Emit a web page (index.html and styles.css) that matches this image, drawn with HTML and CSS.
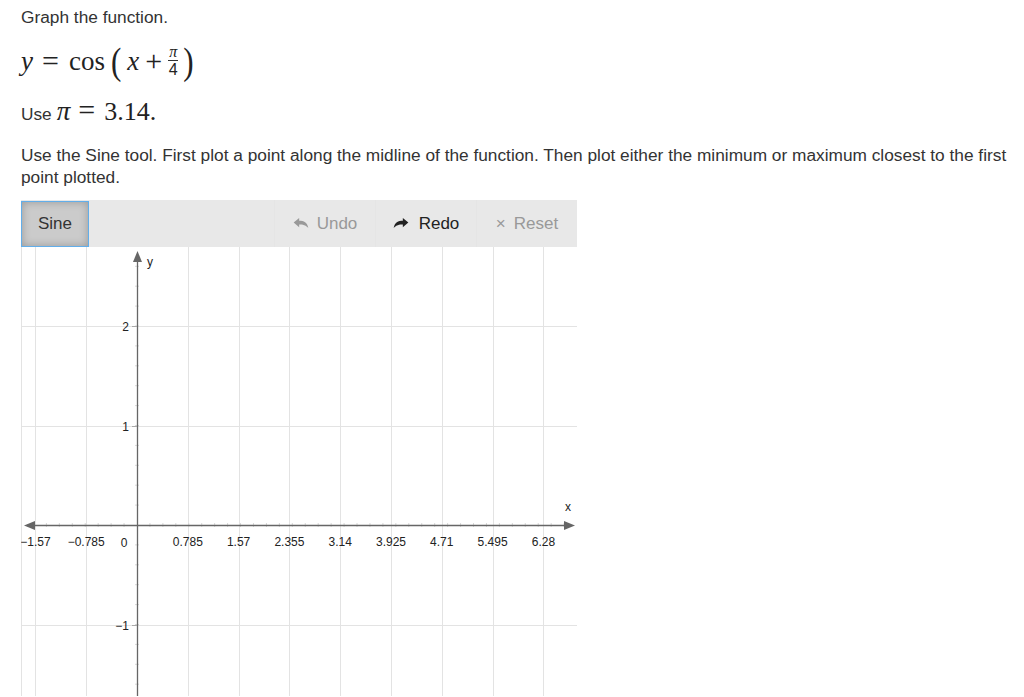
FILE: index.html
```html
<!DOCTYPE html>
<html lang="en">
<head>
    <meta charset="UTF-8">
    <title>Graph the function</title>
    <link rel="stylesheet" href="styles.css">
</head>
<body>
    <div class="question">
        <p class="prompt">Graph the function.</p>

        <div class="math">
            <span class="var">y</span><span class="op">=</span><span class="fn">cos</span><span class="paren">(</span><span class="var">x</span><span class="op plus">+</span><span class="frac"><span class="num">π</span><span class="den">4</span></span><span class="paren close">)</span>
        </div>

        <p class="use">Use<span class="pi">π</span><span class="op">=</span><span class="val">3.14.</span></p>

        <p class="instructions">Use the Sine tool. First plot a point along the midline of the function. Then plot either the minimum or maximum closest to the first point plotted.</p>

        <div class="tool">
            <div class="toolbar">
                <button class="sine">Sine</button>
                <div class="spacer"></div>
                <button class="action disabled">
                    <svg width="16" height="11" viewBox="0 0 16 12"><path d="M0 5 L6 0 V3 C11 3 15 5 16 11 C13 7.5 10 7 6 7 V10 Z" fill="currentColor"/></svg>
                    Undo
                </button>
                <button class="action">
                    <svg width="16" height="11" viewBox="0 0 16 12"><path d="M16 5 L10 0 V3 C5 3 1 5 0 11 C3 7.5 6 7 10 7 V10 Z" fill="currentColor"/></svg>
                    Redo
                </button>
                <button class="action disabled">
                    <span class="times">×</span>
                    Reset
                </button>
            </div>

            <svg class="graph" id="graph" width="556" height="449"></svg>
        </div>
    </div>

    <script>
        // Koordinatensystem: Ursprung und Abstände der Gitterlinien
        const ox = 116, oy = 278;
        const dx = 50.8, dy = 99.5;
        const w = 556, h = 449;
        const svg = document.getElementById("graph");
        let out = "";

        function line(x1, y1, x2, y2, cls) {
            out += `<line x1="${x1}" y1="${y1}" x2="${x2}" y2="${y2}" class="${cls}"/>`;
        }
        function text(x, y, s, cls) {
            out += `<text x="${x}" y="${y}" class="${cls}">${s}</text>`;
        }

        // Gitter
        line(0.5, 0, 0.5, h, "grid");
        for (let i = -2; i <= 8; i++) {
            if (i === 0) continue;
            const x = Math.round(ox + i * dx) + 0.5;
            line(x, 0, x, h, "grid");
        }
        for (let j = -1; j <= 2; j++) {
            if (j === 0) continue;
            const y = Math.round(oy - j * dy) + 0.5;
            line(0, y, w, y, "grid");
        }

        // kleine Striche
        const sx = dx / 0.785 * 0.2;
        for (let x = ox - sx; x > 4; x -= sx) line(x, oy - 2, x, oy + 2, "minor");
        for (let x = ox + sx; x < w - 8; x += sx) line(x, oy - 2, x, oy + 2, "minor");
        for (let y = oy - dy / 5; y > 14; y -= dy / 5) line(ox - 2, y, ox + 2, y, "minor");
        for (let y = oy + dy / 5; y < h; y += dy / 5) line(ox - 2, y, ox + 2, y, "minor");

        // Achsen
        line(6, oy + 0.5, w - 8, oy + 0.5, "axis");
        line(ox + 0.5, 12, ox + 0.5, h, "axis");
        out += `<path d="M3 ${oy + 0.5} L14 ${oy - 4} L14 ${oy + 5} Z" class="arrow"/>`;
        out += `<path d="M${w - 2} ${oy + 0.5} L${w - 13} ${oy - 4} L${w - 13} ${oy + 5} Z" class="arrow"/>`;
        out += `<path d="M${ox + 0.5} 4 L${ox - 4} 15 L${ox + 5} 15 Z" class="arrow"/>`;
        text(ox + 10, 19, "y", "lbl");
        text(w - 12, 264, "x", "lbl");

        // Beschriftung
        const xl = ["−1.57", "−0.785", "", "0.785", "1.57", "2.355", "3.14", "3.925", "4.71", "5.495", "6.28"];
        xl.forEach((s, k) => {
            if (!s) return;
            text(ox + (k - 2) * dx, oy + 21, s, "lbl mid");
        });
        text(ox - 13, oy + 22, "0", "lbl mid");
        [[2, "2"], [1, "1"], [-1, "−1"]].forEach(([j, s]) => {
            const y = Math.round(oy - j * dy) + 0.5;
            line(ox - 5, y, ox, y, "tick");
            text(ox - 8, y + 4, s, "lbl end");
        });

        svg.innerHTML = out;
    </script>
</body>
</html>
```

FILE: styles.css
```css
* {
    box-sizing: border-box;
}

body {
    margin: 0;
    font-family: 'Liberation Sans', Arial, sans-serif;
    color: #333;
    background: #fff;
}

.question {
    padding: 6px 8px 0 21px;
}

p {
    margin: 0;
    font-size: 17.3px;
    line-height: 22px;
}

/* Formel */
.math {
    margin-top: 13px;
    height: 40px;
    display: flex;
    align-items: center;
    font-family: 'Liberation Serif', 'Times New Roman', serif;
    font-size: 27px;
    color: #222;
}

.var, .pi {
    font-style: italic;
    font-family: 'Liberation Serif', serif;
}

.op {
    margin: 0 7px 0 9px;
    font-size: 30px;
}

.op.plus {
    margin: 0 5px 0 6px;
}

.fn {
    margin: 0 6px 0 3px;
}

.paren {
    font-size: 31px;
    transform: scaleY(1.25);
    margin-right: 6px;
}

.paren.close {
    margin: 0 0 0 5px;
}

.frac {
    display: inline-flex;
    flex-direction: column;
    align-items: center;
    font-size: 16px;
    line-height: 14px;
    margin-left: 1px;
}

.frac .num {
    font-style: italic;
    border-bottom: 1px solid #333;
    padding: 0 1px 1px;
}

.frac .den {
    font-family: 'Liberation Sans', Arial, sans-serif;
    padding-top: 2px;
}

.use {
    margin-top: 18px;
    display: flex;
    align-items: baseline;
}

.use .pi {
    font-size: 27px;
    margin-left: 5px;
    color: #222;
}

.use .op,
.use .val {
    font-family: 'Liberation Serif', serif;
    font-size: 26px;
    color: #222;
}

.use .op {
    font-size: 30px;
    margin: 0 9px 0 8px;
}

.instructions {
    margin-top: 19px;
}

/* Werkzeug */
.tool {
    margin-top: 12px;
    width: 556px;
}

.toolbar {
    display: flex;
    height: 47px;
    background: #e8e8e8;
    align-items: stretch;
}

.toolbar button {
    font-family: 'Liberation Sans', Arial, sans-serif;
    font-size: 17px;
    border: none;
    background: none;
    padding: 0;
    cursor: pointer;
}

.sine {
    width: 68px;
    height: 46px;
    margin-top: 1px;
    background: #cbcbcb !important;
    border: 1px solid #62aeea !important;
    box-shadow: inset 0 0 8px rgba(0, 0, 0, 0.25);
    color: #333;
}

.spacer {
    flex: 1;
}

.action {
    width: 101px;
    display: flex;
    align-items: center;
    justify-content: center;
    gap: 10px;
    color: #222;
    border-left: 1px solid #e5e5e5 !important;
}

.action.disabled {
    color: #999;
    gap: 8px;
}

.action:first-of-type {
    border-left: none !important;
}

.times {
    font-size: 17px;
}

.graph {
    display: block;
    background: #fff;
}

.grid {
    stroke: #e3e3e3;
    stroke-width: 1;
}

.minor {
    stroke: #d8d8d8;
    stroke-width: 1;
}

.axis {
    stroke: #666;
    stroke-width: 1.3;
}

.tick {
    stroke: #aaa;
    stroke-width: 1;
}

.arrow {
    fill: #666;
}

.lbl {
    font-family: 'Liberation Sans', Arial, sans-serif;
    font-size: 12px;
    fill: #222;
}

.mid {
    text-anchor: middle;
}

.end {
    text-anchor: end;
}
```
